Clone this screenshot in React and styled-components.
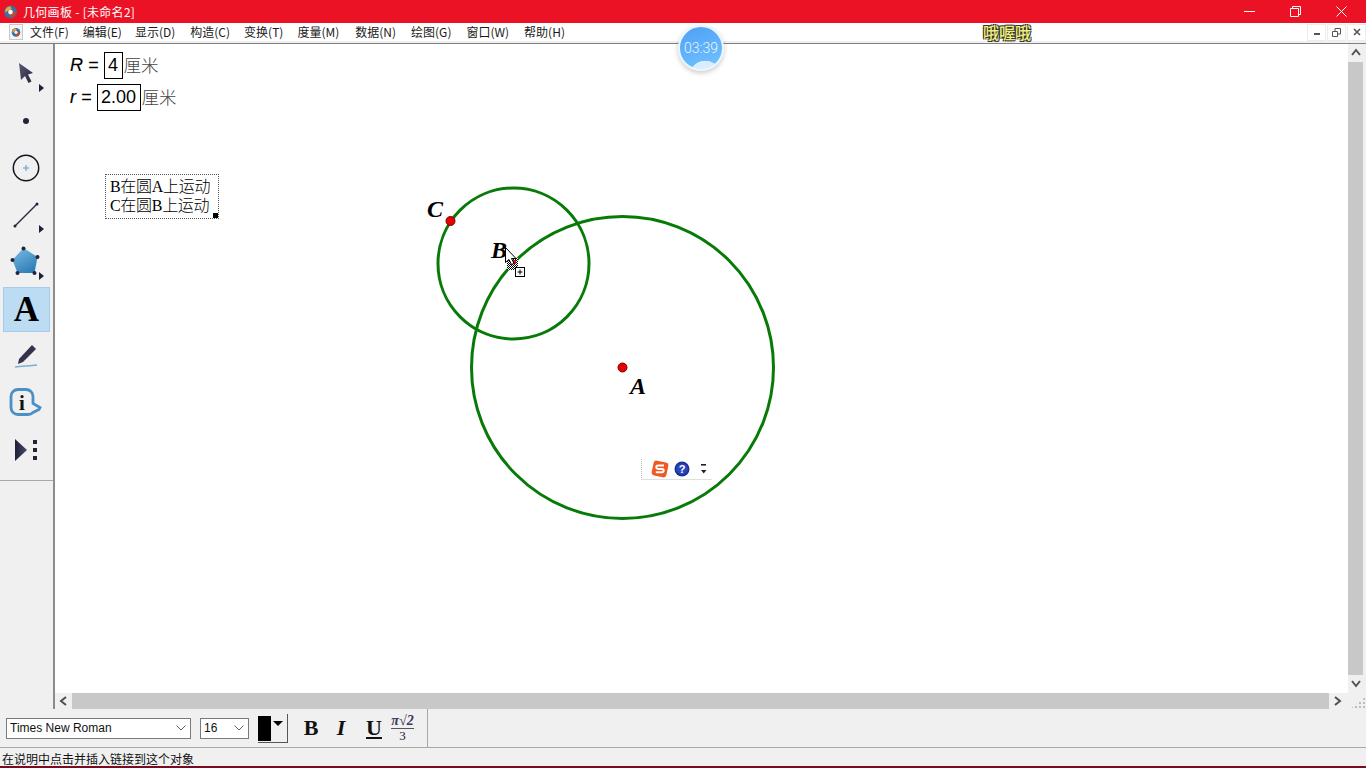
import React from 'react';
import styled, { createGlobalStyle } from 'styled-components';

const MENUS = [
  { label: '文件(F)', gap: 14 },
  { label: '编辑(E)', gap: 13 },
  { label: '显示(D)', gap: 15 },
  { label: '构造(C)', gap: 14 },
  { label: '变换(T)', gap: 14 },
  { label: '度量(M)', gap: 16 },
  { label: '数据(N)', gap: 15 },
  { label: '绘图(G)', gap: 15 },
  { label: '窗口(W)', gap: 15 },
  { label: '帮助(H)', gap: 0 },
];

function Flyout() {
  return <FlyoutMark />;
}

function AppIcon({ size = 14 }) {
  return (
    <svg width={size} height={size} viewBox="0 0 14 14">
      <circle cx="7" cy="7.5" r="6" fill="#3f6f9c" />
      <path d="M2 8a5 5 0 0 1 5-6l1 3-3 1z" fill="#e8a33c" />
      <path d="M7 13a5 5 0 0 0 5-5L9 7 7 9z" fill="#c6492f" />
      <circle cx="7" cy="7.5" r="2.2" fill="#f4f4f4" />
    </svg>
  );
}

function Cursor() {
  return (
    <svg width="22" height="32" viewBox="0 0 22 32">
      <defs>
        <pattern id="dither" width="2" height="2" patternUnits="userSpaceOnUse">
          <rect width="2" height="2" fill="#fff" />
          <rect width="1" height="1" fill="#000" />
          <rect x="1" y="1" width="1" height="1" fill="#000" />
        </pattern>
      </defs>
      <rect x="2" y="11" width="11" height="12" fill="url(#dither)" />
      <rect x="6" y="13" width="5" height="4" fill="#c81020" />
      <path d="M.5.5v15l3.500-3 2.500 5 2.500-1-2.500-5h4.500z" fill="#fff" stroke="#000" />
      <rect x="10.500" y="20.500" width="9" height="9" fill="#fff" stroke="#000" />
      <path d="M15 22.500v5M12.500 25h5" stroke="#000" />
    </svg>
  );
}

function Chevron() {
  return (
    <svg width="10" height="6" viewBox="0 0 10 6">
      <path d="M.5.5 5 5 9.5.5" fill="none" stroke="#606060" />
    </svg>
  );
}

function ScrollArrow({ dir }) {
  const paths = {
    up: 'M1 7 5 2l4 5',
    down: 'M1 2l4 5 4-5',
    left: 'M7 1 2 5l5 4',
    right: 'M2 1l5 4-5 4',
  };
  return (
    <svg width="10" height="10" viewBox="0 0 10 10">
      <path d={paths[dir]} fill="none" stroke="#505050" strokeWidth="2" />
    </svg>
  );
}

function SogouBar() {
  return (
    <ImeBar>
      <svg width="18" height="18" viewBox="0 0 18 18">
        <rect x="1.5" y="1.5" width="15" height="15" rx="3" fill="#ee5a22" transform="rotate(12 9 9)" />
        <path d="M13 5.5H7a1.4 1.4 0 0 0 0 3.4h4a1.4 1.4 0 0 1 0 3.4H4.8" fill="none" stroke="#fff" strokeWidth="2" />
      </svg>
      <svg width="16" height="16" viewBox="0 0 16 16">
        <circle cx="8" cy="8" r="7.5" fill="#1d2f96" />
        <circle cx="8" cy="8" r="5.8" fill="#2a46b8" />
        <text x="8" y="12" textAnchor="middle" fontSize="11" fontWeight="700" fontFamily="Liberation Sans, sans-serif" fill="#fff">?</text>
      </svg>
      <ImeArrow>
        <svg width="8" height="12" viewBox="0 0 8 12">
          <rect x="1" y="1" width="5" height="1.6" fill="#222" />
          <path d="M1 7h5.4L3.7 10.5z" fill="#222" />
        </svg>
      </ImeArrow>
    </ImeBar>
  );
}

export default function App() {
  return (
    <Window>
      <GlobalStyle />
      <TitleBar>
        <AppIcon size={15} />
        <TitleText>几何画板 - [未命名2]</TitleText>
        <Controls>
          <svg width="11" height="11" viewBox="0 0 11 11"><path d="M0 5.5h11" stroke="#fff" /></svg>
          <svg width="11" height="11" viewBox="0 0 11 11"><path d="M.5 2.5h8v8h-8zM2.5 2.5v-2h8v8h-2" fill="none" stroke="#fff" /></svg>
          <svg width="11" height="11" viewBox="0 0 11 11"><path d="M.5.5l10 10M10.5.5l-10 10" stroke="#fff" /></svg>
        </Controls>
      </TitleBar>

      <MenuBar>
        <DocIcon><AppIcon size={10} /></DocIcon>
        <MenuList>
          {MENUS.map((m) => (
            <MenuItem key={m.label} $gap={m.gap}>{m.label}</MenuItem>
          ))}
        </MenuList>
        <Marquee>哦喔哦</Marquee>
        <MdiButtons>
          <MdiButton>
            <svg width="8" height="8" viewBox="0 0 8 8"><rect x="1" y="5" width="6" height="2" fill="#555" /></svg>
          </MdiButton>
          <MdiButton>
            <svg width="9" height="9" viewBox="0 0 9 9"><path d="M.5 3.5h5v5h-5zM3 3V.5h5.5V6H6" fill="none" stroke="#555" /></svg>
          </MdiButton>
          <MdiButton>
            <svg width="8" height="8" viewBox="0 0 8 8"><path d="M1 1l6 6M7 1 1 7" stroke="#555" strokeWidth="1.6" /></svg>
          </MdiButton>
        </MdiButtons>
      </MenuBar>

      <Timer>03:39</Timer>

      <Main>
        <Toolbox>
          <ToolList>
            <Tool>
              <svg width="20" height="24" viewBox="0 1 20 24">
                <defs>
                  <linearGradient id="arrowFill" x1="0" y1="0" x2="1" y2="1">
                    <stop offset="0" stopColor="#5a5a78" />
                    <stop offset="1" stopColor="#24243c" />
                  </linearGradient>
                </defs>
                <path d="M3 2 17 12l-5 1.5 3.5 7-3 1.5-3.5-7L5 19z" fill="url(#arrowFill)" />
              </svg>
              <Flyout />
            </Tool>
            <Tool>
              <svg width="8" height="8" viewBox="0 0 8 8"><circle cx="4" cy="4" r="3" fill="#22243a" /></svg>
            </Tool>
            <Tool>
              <svg width="28" height="28" viewBox="0 0 28 28">
                <circle cx="14" cy="14" r="12.7" fill="none" stroke="#15151f" strokeWidth="1.5" />
                <path d="M14 11v6M11 14h6" stroke="#5a9bd0" />
              </svg>
            </Tool>
            <Tool>
              <svg width="26" height="26" viewBox="0 0 26 26">
                <path d="M2 24 24 2" stroke="#2c2c44" strokeWidth="1.5" />
                <circle cx="2" cy="24" r="1.5" fill="#22243a" />
                <circle cx="24" cy="2" r="1.5" fill="#22243a" />
              </svg>
              <Flyout />
            </Tool>
            <Tool>
              <svg width="32" height="32" viewBox="0 0 32 32">
                <defs>
                  <linearGradient id="polyFill" x1="0" y1="0" x2="0.6" y2="1">
                    <stop offset="0" stopColor="#7cbde4" />
                    <stop offset="1" stopColor="#2f7fb8" />
                  </linearGradient>
                </defs>
                <path d="M13.500 2 27.500 11l-3 16h-17L2.500 14z" fill="url(#polyFill)" />
                <g fill="#22243a">
                  <circle cx="13.500" cy="2.500" r="2" />
                  <circle cx="27.500" cy="11" r="2" />
                  <circle cx="24.500" cy="27" r="2" />
                  <circle cx="7.500" cy="27" r="2" />
                  <circle cx="2.500" cy="14" r="2" />
                </g>
              </svg>
              <Flyout />
            </Tool>
            <Tool $active>
              <BigA>A</BigA>
            </Tool>
            <Tool>
              <svg width="28" height="28" viewBox="0 0 28 28">
                <path d="M7 17 20 3l4 4L11 20l-5 2z" fill="#33334d" />
                <path d="M3 25c7-1 14-1 22-2" fill="none" stroke="#7ab0da" strokeWidth="1.5" />
              </svg>
            </Tool>
            <Tool>
              <svg width="34" height="32" viewBox="0 0 34 32">
                <path d="M9 2.500h8a7 7 0 0 1 7 7v7l7 4-1 2-6 3a7 7 0 0 1-5 2H9a7 7 0 0 1-7-7V9.500a7 7 0 0 1 7-7z" fill="none" stroke="#4a90c4" strokeWidth="2.8" />
                <text x="13" y="23" textAnchor="middle" fontSize="21" fontWeight="700" fontFamily="Liberation Serif, serif" fill="#111">i</text>
              </svg>
            </Tool>
            <Tool>
              <svg width="26" height="24" viewBox="0 0 26 24">
                <defs>
                  <linearGradient id="playFill" x1="0" y1="0" x2="1" y2="0">
                    <stop offset="0" stopColor="#1f2036" />
                    <stop offset="1" stopColor="#4a4a6a" />
                  </linearGradient>
                </defs>
                <path d="M2 1 14 12 2 23z" fill="url(#playFill)" />
                <g fill="#22243a">
                  <rect x="20" y="2" width="4" height="4" />
                  <rect x="20" y="10" width="4" height="4" />
                  <rect x="20" y="18" width="4" height="4" />
                </g>
              </svg>
            </Tool>
          </ToolList>
          <ToolDivider />
        </Toolbox>

        <Workspace>
          <WorkRow>
            <Canvas>
              <Sketch width="1293" height="649">
                <circle cx="567.5" cy="323.5" r="151" fill="none" stroke="#087a08" strokeWidth="3" />
                <circle cx="458.5" cy="219.5" r="75.5" fill="none" stroke="#087a08" strokeWidth="3" />
                <circle cx="567.5" cy="323.5" r="4.500" fill="#e60000" stroke="#7a0000" />
                <circle cx="395.5" cy="177" r="4.500" fill="#e60000" stroke="#7a0000" />
              </Sketch>

              <Param $left={15} $top={8}>
                <ParamName>R =</ParamName>
                <ParamBox>4</ParamBox>
                <ParamUnit>厘米</ParamUnit>
              </Param>
              <Param $left={15} $top={40}>
                <ParamName>r =</ParamName>
                <ParamBox>2.00</ParamBox>
                <ParamUnit>厘米</ParamUnit>
              </Param>

              <Note>
                B在圆A上运动
                <br />
                C在圆B上运动
                <NoteHandle />
              </Note>

              <PointLabel $left={372} $top={151}>C</PointLabel>
              <PointLabel $left={436} $top={192}>B</PointLabel>
              <PointLabel $left={575} $top={328}>A</PointLabel>

              <CursorMark><Cursor /></CursorMark>
              <SogouBar />
            </Canvas>
            <VScroll>
              <ArrowCell><ScrollArrow dir="up" /></ArrowCell>
              <VThumb />
              <ArrowCell><ScrollArrow dir="down" /></ArrowCell>
            </VScroll>
          </WorkRow>
          <HScroll>
            <HArrowCell><ScrollArrow dir="left" /></HArrowCell>
            <HThumb />
            <HArrowCell><ScrollArrow dir="right" /></HArrowCell>
            <Grip />
          </HScroll>
        </Workspace>
      </Main>

      <FormatBar>
        <Combo $width={185}>
          <span>Times New Roman</span>
          <Chevron />
        </Combo>
        <Combo $width={49}>
          <span>16</span>
          <Chevron />
        </Combo>
        <ColorPick>
          <Swatch />
          <ColorCaret />
        </ColorPick>
        <FormatGroup>
          <FormatBtn $bold>B</FormatBtn>
          <FormatBtn $italic>I</FormatBtn>
          <FormatBtn $bold $underline>U</FormatBtn>
          <Fraction>
            <Numerator>π√2</Numerator>
            <Denominator>3</Denominator>
          </Fraction>
        </FormatGroup>
        <BarDivider />
      </FormatBar>

      <StatusBar>在说明中点击并插入链接到这个对象</StatusBar>
    </Window>
  );
}

const GlobalStyle = createGlobalStyle`
  html, body {
    margin: 0;
    padding: 0;
    overflow: hidden;
    background: #f0f0f0;
  }
`;

const UI_FONT = `"Noto Sans CJK SC", "Noto Sans", sans-serif`;

const Window = styled.div`
  position: relative;
  display: flex;
  flex-direction: column;
  width: 1366px;
  height: 768px;
  overflow: hidden;
  font-family: ${UI_FONT};
  color: #111;
`;

const TitleBar = styled.div`
  display: flex;
  align-items: center;
  flex: 0 0 23px;
  padding-left: 3px;
  background: #eb1226;
  color: #fff;
`;

const TitleText = styled.div`
  margin-left: 5px;
  font-size: 12px;
  letter-spacing: 0.3px;
`;

const Controls = styled.div`
  display: flex;
  align-items: center;
  gap: 35px;
  margin-left: auto;
  padding-right: 19px;
`;

const MenuBar = styled.div`
  display: flex;
  align-items: center;
  flex: 0 0 21px;
  box-sizing: border-box;
  padding-left: 9px;
  background: linear-gradient(#fff 0 18px, #f0f0f0 18px);
  border-bottom: 1px solid #808080;
`;

const DocIcon = styled.div`
  display: flex;
  align-items: center;
  justify-content: center;
  width: 12px;
  height: 14px;
  margin-bottom: 2px;
  background: #f4f4f4;
  border: 1px solid #c8c8c8;
`;

const MenuList = styled.div`
  display: flex;
  margin-left: 7px;
  margin-bottom: 2px;
`;

const MenuItem = styled.div`
  margin-right: ${(p) => p.$gap}px;
  font-size: 12px;
  line-height: 18px;
  white-space: nowrap;
  color: #1a1a1a;
`;

const Marquee = styled.div`
  position: absolute;
  left: 983px;
  top: 23px;
  font-size: 16px;
  line-height: 18px;
  font-weight: 500;
  color: #efef7a;
  text-shadow: -1px -1px 0 #333, 1px -1px 0 #333, -1px 1px 0 #333, 1px 1px 0 #333;
`;

const MdiButtons = styled.div`
  display: flex;
  gap: 1px;
  margin-left: auto;
  margin-bottom: 2px;
`;

const MdiButton = styled.div`
  display: flex;
  align-items: center;
  justify-content: center;
  width: 19px;
  height: 17px;
  box-sizing: border-box;
  border: 1px solid #ececec;
`;

const Timer = styled.div`
  position: absolute;
  z-index: 2;
  left: 678px;
  top: 25px;
  display: flex;
  align-items: center;
  justify-content: center;
  width: 46px;
  height: 46px;
  box-sizing: border-box;
  border: 2px solid #e8f6ff;
  border-radius: 50%;
  background: radial-gradient(circle at 60% 118%, #d8eeff 0 28%, transparent 29%),
    linear-gradient(160deg, #4f9ff5, #72c4ff);
  box-shadow: 0 2px 5px rgba(0, 0, 0, 0.22);
  color: #eaf6ff;
  font-family: "Roboto", sans-serif;
  font-size: 14px;
  font-weight: 300;
`;

const Main = styled.div`
  display: flex;
  flex: 1;
  min-height: 0;
`;

const Toolbox = styled.div`
  flex: 0 0 55px;
  box-sizing: border-box;
  padding-top: 6px;
  background: #f0f0f0;
  border-right: 2px solid #8c8c8c;
`;

const ToolList = styled.div`
  display: flex;
  flex-direction: column;
  align-items: center;
`;

const Tool = styled.div`
  position: relative;
  display: flex;
  align-items: center;
  justify-content: center;
  width: 47px;
  height: ${(p) => (p.$active ? 45 : 47)}px;
  margin-top: ${(p) => (p.$active ? 2 : 0)}px;
  box-sizing: border-box;
  padding-right: ${(p) => (p.$active ? 0 : 2)}px;
  background: ${(p) => (p.$active ? '#bcdcf4' : 'transparent')};
  border: 1px solid ${(p) => (p.$active ? '#a4cdea' : 'transparent')};
`;

const FlyoutMark = styled.span`
  position: absolute;
  right: 5px;
  bottom: 4px;
  width: 0;
  height: 0;
  border-top: 4px solid transparent;
  border-bottom: 4px solid transparent;
  border-left: 5px solid #1f2036;
`;

const BigA = styled.span`
  font-family: "Liberation Serif", serif;
  font-size: 35px;
  font-weight: 700;
  line-height: 1;
  color: #000;
`;

const ToolDivider = styled.div`
  height: 1px;
  margin-top: 7px;
  background: #a8a8a8;
`;

const Workspace = styled.div`
  display: flex;
  flex-direction: column;
  flex: 1;
  min-width: 0;
  background: #f0f0f0;
`;

const WorkRow = styled.div`
  display: flex;
  flex: 1;
  min-height: 0;
`;

const Canvas = styled.div`
  position: relative;
  flex: 1;
  overflow: hidden;
  background: #fff;
`;

const Sketch = styled.svg`
  position: absolute;
  inset: 0;
`;

const Param = styled.div`
  position: absolute;
  left: ${(p) => p.$left}px;
  top: ${(p) => p.$top}px;
  display: flex;
  align-items: center;
  height: 27px;
`;

const ParamName = styled.span`
  margin-right: 5px;
  font-family: "Liberation Sans", sans-serif;
  font-size: 18px;
  font-style: italic;
  -webkit-text-stroke: 0.15px #000;
  color: #000;
`;

const ParamBox = styled.span`
  display: flex;
  align-items: center;
  height: 27px;
  box-sizing: border-box;
  padding: 0 3.5px;
  border: 1px solid #000;
  font-family: "Liberation Sans", sans-serif;
  font-size: 18px;
  color: #000;
`;

const ParamUnit = styled.span`
  margin-left: 1px;
  margin-bottom: 3px;
  font-size: 17.500px;
  font-weight: 300;
  color: #444;
`;

const Note = styled.div`
  position: absolute;
  left: 50px;
  top: 130px;
  width: 114px;
  height: 45px;
  box-sizing: border-box;
  padding: 2px 4px;
  border: 1px dotted #555;
  font-family: "Liberation Serif", "Noto Sans CJK SC", serif;
  font-size: 16px;
  line-height: 19px;
  letter-spacing: -0.3px;
  font-weight: 300;
  color: #000;
  white-space: nowrap;
`;

const NoteHandle = styled.span`
  position: absolute;
  right: 0;
  bottom: 0;
  width: 5px;
  height: 5px;
  background: #000;
`;

const PointLabel = styled.span`
  position: absolute;
  left: ${(p) => p.$left}px;
  top: ${(p) => p.$top}px;
  font-family: "Liberation Serif", serif;
  font-size: 24px;
  line-height: 28px;
  font-style: italic;
  font-weight: 700;
  color: #000;
`;

const CursorMark = styled.div`
  position: absolute;
  left: 450px;
  top: 203px;
  line-height: 0;
`;

const ImeBar = styled.div`
  position: absolute;
  left: 586px;
  top: 415px;
  display: flex;
  align-items: center;
  gap: 5px;
  width: 71px;
  height: 21px;
  box-sizing: border-box;
  padding: 0 0 0 9px;
  border-left: 1px dotted #bbb;
  border-bottom: 1px solid #e0e0e0;
`;

const ImeArrow = styled.span`
  display: flex;
  margin-left: 5px;
`;

const VScroll = styled.div`
  display: flex;
  flex-direction: column;
  flex: 0 0 18px;
  box-sizing: border-box;
  padding-right: 3px;
  background: #f0f0f0;
`;

const ArrowCell = styled.div`
  display: flex;
  align-items: center;
  justify-content: center;
  flex: 0 0 18px;
`;

const VThumb = styled.div`
  flex: 1;
  background: #c8c8c8;
`;

const HScroll = styled.div`
  display: flex;
  flex: 0 0 16px;
  background: #f0f0f0;
`;

const HArrowCell = styled.div`
  display: flex;
  align-items: center;
  justify-content: center;
  flex: 0 0 17px;
`;

const HThumb = styled.div`
  flex: 1;
  background: #c8c8c8;
`;

const Grip = styled.div`
  flex: 0 0 20px;
  background: radial-gradient(circle, #bdbdbd 1px, transparent 1.2px) 0 0 / 4px 4px;
  clip-path: polygon(100% 20%, 100% 100%, 20% 100%);
`;

const FormatBar = styled.div`
  display: flex;
  align-items: center;
  flex: 0 0 39px;
  box-sizing: border-box;
  padding-left: 6px;
  background: #f0f0f0;
  border-bottom: 1px solid #a8a8a8;
`;

const Combo = styled.div`
  display: flex;
  align-items: center;
  justify-content: space-between;
  width: ${(p) => p.$width}px;
  height: 21px;
  box-sizing: border-box;
  margin-right: 9px;
  padding: 0 4px 0 3px;
  background: #fff;
  border: 1px solid #7a7a7a;
  font-family: "Liberation Sans", sans-serif;
  font-size: 12px;
  color: #111;
`;

const ColorPick = styled.div`
  position: relative;
  display: flex;
  width: 30px;
  height: 29px;
  box-sizing: border-box;
  border-right: 1px solid #555;
  border-bottom: 1px solid #555;
`;

const Swatch = styled.div`
  width: 13px;
  height: 25px;
  margin-top: 2px;
  background: #000;
`;

const ColorCaret = styled.span`
  position: absolute;
  right: 4px;
  top: 7px;
  width: 0;
  height: 0;
  border-left: 5px solid transparent;
  border-right: 5px solid transparent;
  border-top: 5px solid #000;
`;

const FormatGroup = styled.div`
  display: flex;
  align-items: center;
  margin-left: 8px;
`;

const FormatBtn = styled.span`
  width: 30px;
  margin-left: ${(p) => (p.$underline ? 3 : 0)}px;
  text-align: center;
  font-family: "Liberation Serif", serif;
  font-size: 22px;
  font-weight: ${(p) => (p.$bold || p.$italic ? 700 : 400)};
  font-style: ${(p) => (p.$italic ? 'italic' : 'normal')};
  text-decoration: ${(p) => (p.$underline ? 'underline' : 'none')};
  color: #111;
`;

const Fraction = styled.div`
  display: flex;
  flex-direction: column;
  align-items: center;
  width: 21px;
  margin-left: 3px;
  font-family: "Liberation Serif", serif;
  line-height: 1;
`;

const Numerator = styled.span`
  border-bottom: 1px solid #555;
  font-size: 14px;
  font-style: italic;
  font-weight: 700;
  white-space: nowrap;
  color: #3a3a58;
`;

const Denominator = styled.span`
  font-size: 13px;
  color: #22243a;
`;

const BarDivider = styled.div`
  width: 1px;
  height: 38px;
  margin-left: 14px;
  background: #a8a8a8;
`;

const StatusBar = styled.div`
  flex: 0 0 20px;
  box-sizing: border-box;
  padding-left: 2px;
  background: #f0f0f0;
  border-bottom: 2px solid #7a0a1e;
  font-size: 12px;
  line-height: 21px;
  color: #111;
  white-space: nowrap;
  overflow: hidden;
`;
